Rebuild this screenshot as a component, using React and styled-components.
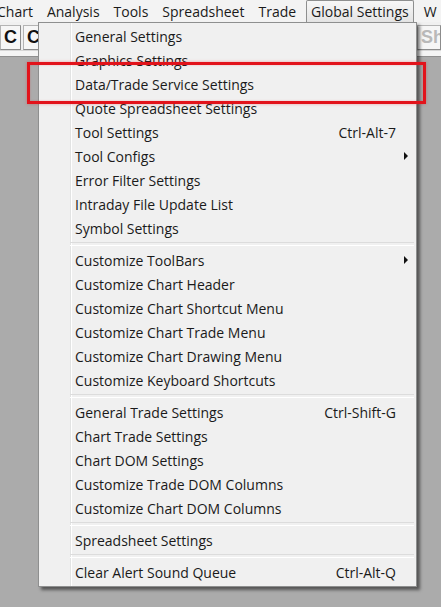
import React from 'react';
import styled, { createGlobalStyle } from 'styled-components';

const GlobalStyle = createGlobalStyle`
    html, body {
        margin: 0;
        padding: 0;
        width: 441px;
        height: 607px;
        overflow: hidden;
        background: #ababab;
    }
    * {
        box-sizing: border-box;
    }
`;

const Screen = styled.div`
    position: relative;
    width: 441px;
    height: 607px;
    display: flex;
    flex-direction: column;
    font-family: "Open Sans", "Noto Sans", sans-serif;
    font-size: 14px;
    color: #1a1a1a;
    overflow: hidden;
`;

const MenuBar = styled.div`
    display: flex;
    align-items: stretch;
    height: 22px;
    margin-left: -10px;
    background: #f3f3f3;
    white-space: nowrap;
`;

const BarItem = styled.div`
    display: flex;
    align-items: center;
    padding: 0 ${props => props.active ? 4 : 6}px;
    margin: 0 ${props => props.active ? 3 : 0}px;
    line-height: 1;
    border: ${props => props.active ? '1px solid #8e8f8f' : '1px solid transparent'};
    border-bottom: none;
    border-radius: 2px 2px 0 0;
    background: ${props => props.active ? 'linear-gradient(#f7f7f7, #e4e4e4)' : 'transparent'};
`;

const Toolbar = styled.div`
    display: flex;
    align-items: flex-start;
    gap: 2px;
    height: 28px;
    padding-top: 3px;
    background: #f0f0f0;
`;

const ToolButton = styled.div`
    display: flex;
    align-items: center;
    width: ${props => props.width}px;
    height: 25px;
    margin-left: ${props => props.push ? 'auto' : '0'};
    padding-left: ${props => props.pad || 0}px;
    border: 1px solid #b4b4b4;
    border-right-color: #8c8c8c;
    border-bottom-color: #8c8c8c;
    background: #f6f6f6;
    font-family: "Liberation Sans", Arial, sans-serif;
    font-weight: bold;
    font-size: 18px;
    color: ${props => props.disabled ? '#b9b9b9' : '#111'};
    overflow: hidden;
    justify-content: ${props => props.pad ? 'flex-start' : 'center'};
`;

const Strip = styled.div`
    height: 7px;
    background: #f4f4f4;
    border-top: 1px solid #d6d6d6;
    border-bottom: 1px solid #8f8f8f;
`;

const Workspace = styled.div`
    flex: 1;
    background: #ababab;
`;

const Dropdown = styled.div`
    position: absolute;
    top: 22px;
    left: 38px;
    width: 379px;
    padding: 1px 2px 2px 2px;
    border: 1px solid #8e8f8f;
    background: linear-gradient(to right,
        #f0f0f0 31px, #e2e3e3 31px, #e2e3e3 32px,
        #ffffff 32px, #ffffff 33px, #f0f0f0 33px);
    box-shadow: 3px 3px 3px rgba(0, 0, 0, 0.5);
    display: flex;
    flex-direction: column;
`;

const Item = styled.div`
    display: grid;
    grid-template-columns: 1fr auto 18px;
    align-items: center;
    height: 24px;
    padding-left: 34px;
    white-space: nowrap;
`;

const Shortcut = styled.span`
    text-align: right;
`;

const Arrow = styled.span`
    justify-self: center;
    width: 0;
    height: 0;
    margin-left: 2px;
    border-top: 4px solid transparent;
    border-bottom: 4px solid transparent;
    border-left: 4px solid #111;
`;

const Separator = styled.div`
    height: 8px;
    display: flex;
    align-items: center;
    padding-left: 29px;

    &::after {
        content: "";
        flex: 1;
        height: 2px;
        border-top: 1px solid #dcdcdc;
        border-bottom: 1px solid #ffffff;
    }
`;

const Highlight = styled.div`
    position: absolute;
    left: 27px;
    top: 62px;
    width: 399px;
    height: 42px;
    border: 3px solid #e2131b;
    box-shadow: 0 0 3px rgba(226, 19, 27, 0.35), inset 0 0 2px rgba(226, 19, 27, 0.3);
    pointer-events: none;
`;

const menuBar = [
    { label: 'Chart' },
    { label: 'Analysis' },
    { label: 'Tools' },
    { label: 'Spreadsheet' },
    { label: 'Trade' },
    { label: 'Global Settings', active: true },
    { label: 'W' },
];

const groups = [
    [
        { label: 'General Settings' },
        { label: 'Graphics Settings' },
        { label: 'Data/Trade Service Settings' },
        { label: 'Quote Spreadsheet Settings' },
        { label: 'Tool Settings', shortcut: 'Ctrl-Alt-7' },
        { label: 'Tool Configs', sub: true },
        { label: 'Error Filter Settings' },
        { label: 'Intraday File Update List' },
        { label: 'Symbol Settings' },
    ],
    [
        { label: 'Customize ToolBars', sub: true },
        { label: 'Customize Chart Header' },
        { label: 'Customize Chart Shortcut Menu' },
        { label: 'Customize Chart Trade Menu' },
        { label: 'Customize Chart Drawing Menu' },
        { label: 'Customize Keyboard Shortcuts' },
    ],
    [
        { label: 'General Trade Settings', shortcut: 'Ctrl-Shift-G' },
        { label: 'Chart Trade Settings' },
        { label: 'Chart DOM Settings' },
        { label: 'Customize Trade DOM Columns' },
        { label: 'Customize Chart DOM Columns' },
    ],
    [
        { label: 'Spreadsheet Settings' },
    ],
    [
        { label: 'Clear Alert Sound Queue', shortcut: 'Ctrl-Alt-Q' },
    ],
];

export default function App() {
    return (
        <Screen>
            <GlobalStyle />
            <MenuBar>
                {menuBar.map(m => (
                    <BarItem key={m.label} active={m.active}>{m.label}</BarItem>
                ))}
            </MenuBar>
            <Toolbar>
                <ToolButton width={21}>C</ToolButton>
                <ToolButton width={21}>C</ToolButton>
                <ToolButton width={24} push disabled pad={3}>Sh</ToolButton>
            </Toolbar>
            <Strip />
            <Workspace />
            <Dropdown>
                {groups.map((group, gi) => (
                    <React.Fragment key={gi}>
                        {gi > 0 && <Separator />}
                        {group.map(item => (
                            <Item key={item.label}>
                                <span>{item.label}</span>
                                <Shortcut>{item.shortcut}</Shortcut>
                                {item.sub ? <Arrow /> : <span />}
                            </Item>
                        ))}
                    </React.Fragment>
                ))}
            </Dropdown>
            <Highlight />
        </Screen>
    );
}
